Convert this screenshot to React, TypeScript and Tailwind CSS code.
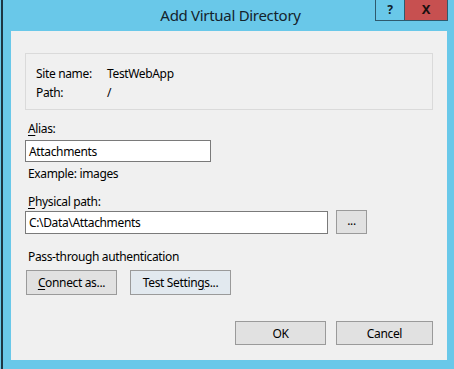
const font = "font-['Noto_Sans','Open_Sans',sans-serif]";

function Btn({ children, className = "" }: { children: React.ReactNode; className?: string }) {
  return (
    <div
      className={`flex items-center justify-center border border-[#9a9a9a] bg-[#e1e1e1] text-[12px] text-black ${className}`}
    >
      {children}
    </div>
  );
}

export default function App() {
  return (
    <div className={`relative h-[369px] w-[454px] overflow-hidden bg-[#69c8e9] pl-px ${font}`}>
      <div className="flex h-full flex-col border-l-2 border-[#1d3644]">
        <div className="relative flex h-[31px] shrink-0 items-center justify-center pl-[4px]">
          <span className="text-[15px] leading-none tracking-[-0.3px] text-[#14232c]">Add Virtual Directory</span>
          <div className="absolute right-[6px] top-0 flex h-[21px]">
            <div className="flex w-[29px] items-center justify-center border border-r-0 border-t-0 border-[#2e5a6e] text-[12px] font-bold text-[#10202a]">
              ?
            </div>
            <div className="flex w-[44px] items-center justify-center border border-t-0 border-[#2e5a6e] bg-[#c75050] text-[13px] font-bold text-[#1a1010]">
              X
            </div>
          </div>
        </div>

        <div className="mb-[9px] ml-[8px] mr-[7px] flex flex-1 flex-col bg-[#f0f0f0] px-[14px] text-[12px] leading-[15px] tracking-[-0.35px] text-black">
          <div className="mt-[22px] h-[57px] border border-[#dadada] pl-[10px] pt-[10px] leading-[19px]">
            <div className="flex">
              <span className="w-[71px]">Site name:</span>
              <span>TestWebApp</span>
            </div>
            <div className="flex">
              <span className="w-[71px]">Path:</span>
              <span>/</span>
            </div>
          </div>

          <div className="mt-[11px] pl-[3px]">
            <span className="underline underline-offset-2">A</span>lias:
          </div>
          <div className="mt-[4px] flex h-[22px] w-[186px] items-center border border-[#7a7a7a] bg-white pl-[3px]">
            Attachments
          </div>
          <div className="mt-[4px] pl-[3px]">Example: images</div>

          <div className="mt-[13px] pl-[3px]">
            <span className="underline underline-offset-2">P</span>hysical path:
          </div>
          <div className="mt-[2px] flex items-start gap-[8px]">
            <div className="flex h-[23px] w-[303px] items-center border border-[#7a7a7a] bg-white pl-[3px]">
              C:\Data\Attachments
            </div>
            <Btn className="-mt-px h-[24px] w-[31px] pb-[4px]">...</Btn>
          </div>

          <div className="mt-[15px] pl-[3px]">Pass-through authentication</div>
          <div className="mt-[6px] flex gap-[13px] pl-px">
            <Btn className="h-[25px] w-[91px]">
              <span className="underline underline-offset-2">C</span>onnect as...
            </Btn>
            <Btn className="h-[25px] w-[101px] border-[#6f8ea6] bg-[#e2e9ef]">
              Test Settin<span className="underline underline-offset-2">g</span>s...
            </Btn>
          </div>

          <div className="mt-[26px] flex justify-end gap-[10px]">
            <Btn className="h-[24px] w-[91px]">OK</Btn>
            <Btn className="h-[24px] w-[97px]">Cancel</Btn>
          </div>
        </div>
      </div>
    </div>
  );
}
